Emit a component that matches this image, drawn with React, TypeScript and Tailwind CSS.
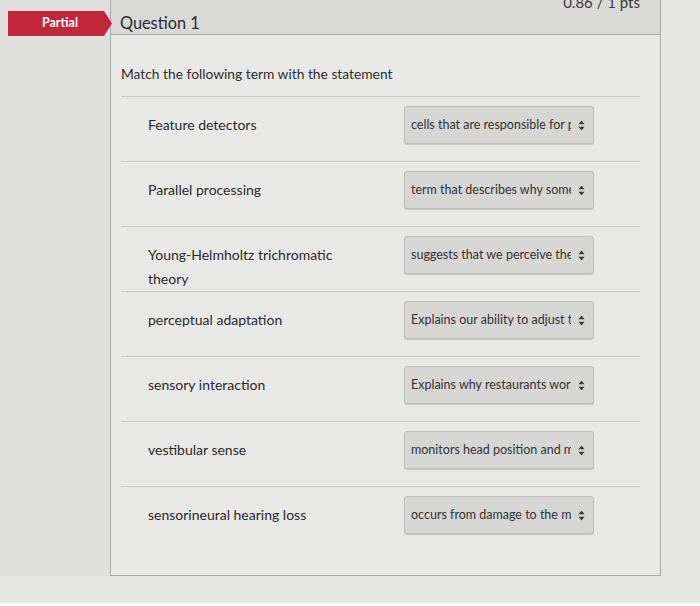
import React from "react";

const rows: { term: string[]; answer: string }[] = [
  { term: ["Feature detectors"], answer: "cells that are responsible for processing specific features" },
  { term: ["Parallel processing"], answer: "term that describes why someone can process many aspects" },
  { term: ["Young-Helmholtz trichromatic", "theory"], answer: "suggests that we perceive the color of three primary" },
  { term: ["perceptual adaptation"], answer: "Explains our ability to adjust to changed sensory input" },
  { term: ["sensory interaction"], answer: "Explains why restaurants work hard on the smell" },
  { term: ["vestibular sense"], answer: "monitors head position and movement" },
  { term: ["sensorineural hearing loss"], answer: "occurs from damage to the mechanical system" },
];

function Arrows() {
  return (
    <svg width="7" height="11" viewBox="0 0 7 11" className="shrink-0">
      <path d="M3.5 0.5 L6.5 4.2 L0.5 4.2 Z" fill="#3a3a3a" />
      <path d="M3.5 10.5 L6.5 6.8 L0.5 6.8 Z" fill="#3a3a3a" />
    </svg>
  );
}

export default function App() {
  return (
    <div
      className="w-[700px] h-[606px] overflow-hidden bg-[#e6e6e5] flex flex-col text-[#2e2e2e]"
      style={{ fontFamily: "Lato, 'Open Sans', 'Liberation Sans', sans-serif" }}
    >
      <div className="flex h-[576px]">
        <div className="w-[110px] shrink-0 bg-[#dfdfde] pt-[11px]">
          <div className="ml-[8px] w-[104px] h-[25px] bg-[#c3253a] flex items-center justify-center text-white text-[12.5px] font-bold [clip-path:polygon(0_0,calc(100%-8px)_0,100%_50%,calc(100%-8px)_100%,0_100%)]">
            Partial
          </div>
        </div>
        <div className="w-[551px] shrink-0 border-l border-r border-b border-[#a9a9a9] flex flex-col">
          <div className="h-[35px] shrink-0 bg-[#d9d9d8] border-b border-[#a9a9a9] flex items-start justify-between pl-[9px] pr-[20px]">
            <div className="pt-[12px] text-[16.3px] leading-[22px] text-[#2a2a2a]">Question 1</div>
            <div className="-mt-[9px] text-[15px] leading-[22px] text-[#3a3a3a]">0.86 / 1 pts</div>
          </div>
          <div className="flex-1 bg-[#e8e8e7] pl-[10px] pr-[20px]">
            <div className="pt-[28px] pb-[11px] text-[13.8px] leading-[22px] text-[#2e2e2e]">
              Match the following term with the statement
            </div>
            {rows.map((r, i) => (
              <div key={i} className="h-[65px] border-t border-[#c9c9c8] flex items-start pt-[9px] pl-[27px]">
                <div className="w-[256px] shrink-0 pt-[7px] text-[14px] leading-[24px] text-[#2a2a2a]">
                  {r.term.map((t, j) => (
                    <div key={j}>{t}</div>
                  ))}
                </div>
                <div className="w-[190px] h-[38px] shrink-0 rounded-[3px] bg-[#d6d6d5] border border-[#bdbdbc] shadow-[0_1px_1px_rgba(0,0,0,0.15)] flex items-center pl-[6px] pr-[8px]">
                  <div className="w-[160px] overflow-hidden whitespace-nowrap text-[12.5px] text-[#333]">
                    {r.answer}
                  </div>
                  <div className="flex-1 flex justify-end">
                    <Arrows />
                  </div>
                </div>
              </div>
            ))}
          </div>
        </div>
        <div className="flex-1 bg-[#e6e6e5]" />
      </div>
      <div className="h-[27px] flex justify-end pr-[20px] items-end">
        <div className="h-[3px] overflow-hidden">
          <div className="text-[16px] leading-[22px] text-[#3a3a3a]">0.86 /</div>
        </div>
      </div>
      <div className="flex-1 bg-white" />
    </div>
  );
}
